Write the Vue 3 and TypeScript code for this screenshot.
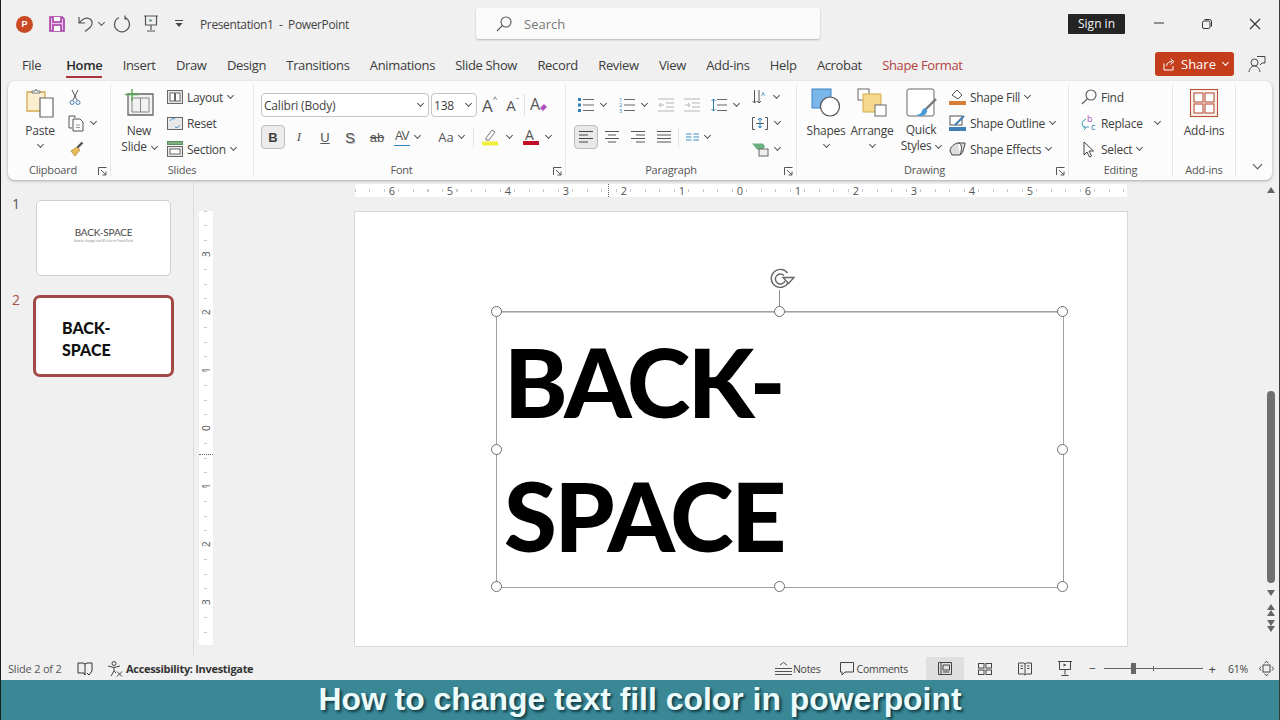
<script setup lang="ts">
const tabs = ['File', 'Home', 'Insert', 'Draw', 'Design', 'Transitions', 'Animations', 'Slide Show', 'Record', 'Review', 'View', 'Add-ins', 'Help', 'Acrobat']
const hRuler = [6, 5, 4, 3, 2, 1, 0, 1, 2, 3, 4, 5, 6]
const vRuler = [3, 2, 1, 0, 1, 2, 3]
const handles = [
  { x: 0, y: 0 }, { x: 50, y: 0 }, { x: 100, y: 0 },
  { x: 0, y: 50 }, { x: 100, y: 50 },
  { x: 0, y: 100 }, { x: 50, y: 100 }, { x: 100, y: 100 },
]
</script>

<template>
  <div class="app">
    <!-- title bar -->
    <header class="titlebar">
      <div class="qat">
        <span class="logo">P</span>
        <svg class="q-save" width="18" height="18" viewBox="0 0 18 18" fill="#eec5ee" stroke="#a23aa2" stroke-width="1.6"><path d="M2 2h12l2 2v12H2z" /><path d="M5 2v5h8V2M5 16v-6h8v6" fill="#fff" /></svg>
        <svg class="q-undo" width="18" height="18" viewBox="0 0 18 18" fill="none" stroke="#555" stroke-width="1.2"><path d="M2 2v6h6M2.500 8C5 4 9 2.500 12 3.500c4 1.500 4 6.500 1 9l-5 4" /></svg>
        <i class="chev q-c1"></i>
        <svg class="q-redo" width="18" height="18" viewBox="0 0 18 18" fill="none" stroke="#555" stroke-width="1.2"><path d="M6 2.500A7.500 7.500 0 1 0 12 2.500M12 0.500v3.500h3" /></svg>
        <svg class="q-show" width="16" height="18" viewBox="0 0 16 18" fill="none" stroke="#555" stroke-width="1.200"><path d="M1 1h14M2.500 1v9h11V1M8 10v5M4 16h8" /><path d="M6.500 4l3 1.500-3 1.500z" fill="#3a8a5a" stroke="none" /></svg>
        <svg class="q-more" width="10" height="10" viewBox="0 0 10 10" fill="#444"><path d="M1 1h8v1H1zM1.500 4h7L5 8z" /></svg>
        <span class="doc-title">Presentation1&nbsp; -&nbsp; PowerPoint</span>
      </div>
      <div class="search">
        <svg width="16" height="16" viewBox="0 0 16 16" fill="none" stroke="#555" stroke-width="1.100"><circle cx="10" cy="6" r="5" /><path d="M6.300 9.700 1 15" /></svg>
        <span>Search</span>
      </div>
      <div class="win">
        <span class="signin">Sign in</span>
        <svg class="w-min" width="12" height="12" viewBox="0 0 12 12" stroke="#333"><path d="M1 6h10" /></svg>
        <svg class="w-res" width="12" height="12" viewBox="0 0 12 12" fill="none" stroke="#333"><rect x="1.500" y="3" width="7.500" height="7.500" rx="1.500" /><path d="M3.500 1.500h5q2 0 2 2v5" /></svg>
        <svg class="w-cls" width="12" height="12" viewBox="0 0 12 12" stroke="#333" stroke-width="1.100"><path d="M1 1l10 10M11 1 1 11" /></svg>
      </div>
    </header>

    <!-- tabs -->
    <nav class="tabs">
      <span v-for="t in tabs" :key="t" class="tab" :class="{ active: t === 'Home', file: t === 'File' }">{{ t }}</span>
      <span class="tab shape-format">Shape Format</span>
      <span class="tabs-right">
        <span class="share">
          <svg width="13" height="13" viewBox="0 0 13 13" fill="none" stroke="#fff"><path d="M1 5.500V12h9V8M3.500 8C4 5 6 3.500 9 3.500M7.500 1 11 3.500 7.500 6.500" /></svg>
          Share <i class="chev white"></i>
        </span>
        <svg class="comments-ic" width="18" height="18" viewBox="0 0 18 18" fill="none" stroke="#444"><circle cx="6.500" cy="7.500" r="3.500" /><path d="M1 17c.5-4 3-6 5.500-6s5 2 5.500 6M9 1.500h8V8h-3l-2 2" /></svg>
      </span>
    </nav>

    <!-- ribbon -->
    <section class="ribbon">
      <div class="group g-clip">
        <div class="gbody">
          <div class="big paste">
            <svg width="30" height="30" viewBox="0 0 30 30" fill="none"><path d="M2 4h18v19H2z" fill="#fbeecf" stroke="#d9a84e" stroke-width="1.300" /><path d="M7 5V3h3l1-2 1 2h3v2z" fill="#fff" stroke="#777" /><path d="M15 10h13v19H15z" fill="#fff" stroke="#666" stroke-width="1.200" /></svg>
            <span class="lbl">Paste</span>
            <i class="chev"></i>
          </div>
          <div class="col clip-col">
            <div class="row26">
              <svg width="14" height="17" viewBox="0 0 14 17" fill="none" stroke="#555"><path d="M4 1l5 10M10 1 5 11" /><circle cx="4" cy="13.500" r="2" stroke="#4a7fb5" /><circle cx="10" cy="13.500" r="2" stroke="#4a7fb5" /></svg>
            </div>
            <div class="row26">
              <svg width="17" height="17" viewBox="0 0 17 17" fill="none" stroke="#555"><path d="M4 13H1V1h6v2" /><path d="M5 4h7l3 3v9H5z" /><path d="M8 10h4M8 12.500h4" stroke="#999" /></svg>
              <i class="chev copy-chev"></i>
            </div>
            <div class="row26">
              <svg width="16" height="16" viewBox="0 0 16 16"><path d="M9 6l-6 4 4 5 5-6z" fill="#e9bb5a" stroke="#a8802f" stroke-width=".7" /><path d="M9.500 6.500 14.500 1.500" stroke="#555" stroke-width="2.400" /></svg>
            </div>
          </div>
        </div>
        <div class="glabel clip-label">Clipboard<svg class="launch" width="9" height="9" viewBox="0 0 9 9" fill="none" stroke="#555"><path d="M.5 8V.5H8.500M3 3l5 5M8 4.500V8H4.500" /></svg></div>
      </div>

      <div class="group g-slides">
        <div class="gbody">
          <div class="big new-slide">
            <svg width="31" height="29" viewBox="0 0 31 29" fill="none"><path d="M4 6h25v21H4z" fill="#f2f2f2" stroke="#666" stroke-width="1.300" /><path d="M8 10h17v14H8zM16.500 10v14" stroke="#888" /><path d="M8 1v12M1 6.500h14" stroke="#54a854" stroke-width="1.400" /></svg>
            <span class="lbl new-lbl">New</span>
            <span class="lbl">Slide <i class="chev inl"></i></span>
          </div>
          <div class="col slide-col">
            <div class="row26 txt"><svg width="16" height="14" viewBox="0 0 16 14" fill="#e8e8e8" stroke="#666"><rect x=".5" y=".5" width="15" height="13" /><rect x="3" y="3" width="4.500" height="8" fill="#fff" /><rect x="8.500" y="3" width="4.500" height="8" fill="#fff" /></svg>Layout <i class="chev inl"></i></div>
            <div class="row26 txt"><svg width="16" height="14" viewBox="0 0 16 14" fill="#e8e8e8" stroke="#666"><rect x=".5" y="1.500" width="15" height="12" /><path d="M3 5q2-4 5-2M13 9q-2 4-5 2" fill="none" stroke="#4a90c9" /></svg>Reset</div>
            <div class="row26 txt"><svg width="16" height="16" viewBox="0 0 16 16" fill="#e8e8e8" stroke="#666"><rect x=".5" y=".5" width="15" height="3" fill="#7fb07f" stroke="#5c8f5c" /><rect x=".5" y="5.500" width="15" height="10" /><rect x="3" y="8" width="10" height="5" fill="#fff" /></svg>Section <i class="chev inl"></i></div>
          </div>
        </div>
        <div class="glabel">Slides</div>
      </div>

      <div class="group g-font">
        <div class="gbody font-body">
          <div class="f-row top">
            <span class="select fname">Calibri (Body)<i class="chev"></i></span>
            <span class="select fsize">138<i class="chev"></i></span>
            <span class="glyph grow">A<sup>^</sup></span>
            <span class="glyph shrink">A<sup>ˇ</sup></span>
            <span class="vsep"></span>
            <span class="glyph clear">
              <svg width="20" height="20" viewBox="0 0 20 20"><text x="1" y="15" font-size="16" fill="#555" font-family="Open Sans, sans-serif">A</text><path d="M11 13l4-4 3 3-4 4z" fill="#b04fc0" /></svg>
            </span>
          </div>
          <div class="f-row bottom">
            <span class="toggle">B</span>
            <span class="fmt ital">I</span>
            <span class="fmt und">U</span>
            <span class="fmt shad">S</span>
            <span class="fmt strike">ab</span>
            <span class="fmt av">AV<em></em></span><i class="chev c-av"></i>
            <span class="fmt aa">Aa</span><i class="chev c-aa"></i>
            <span class="vsep short"></span>
            <span class="fmt hl">
              <svg width="18" height="18" viewBox="0 0 18 18" fill="none"><path d="M5 10l6-8 3 2-6 8-3 0z" fill="#fff" stroke="#777" /><rect x="1" y="13.500" width="16" height="4" fill="#f2ee3c" /></svg>
            </span><i class="chev c-hl"></i>
            <span class="fmt col-a">
              <svg width="18" height="20" viewBox="0 0 18 20"><text x="3" y="13" font-size="14" fill="#555" font-family="Open Sans, sans-serif">A</text><rect x="1" y="14" width="16" height="4" fill="#c00f24" /></svg>
            </span><i class="chev c-col"></i>
          </div>
        </div>
        <div class="glabel font-label">Font<svg class="launch" width="9" height="9" viewBox="0 0 9 9" fill="none" stroke="#555"><path d="M.5 8V.5H8.500M3 3l5 5M8 4.500V8H4.500" /></svg></div>
      </div>

      <div class="group g-para">
        <div class="gbody para-body">
          <div class="para-left">
            <div class="p-row p-top">
              <svg width="16" height="16" viewBox="0 0 16 16" stroke="#666"><path d="M5 2.500h11M5 8h11M5 13.500h11" /><g fill="#2f7fb8" stroke="none"><rect y="1" width="3" height="3" /><rect y="6.500" width="3" height="3" /><rect y="12" width="3" height="3" /></g></svg><i class="chev"></i>
              <svg class="p-num" width="16" height="16" viewBox="0 0 16 16" stroke="#666"><path d="M5 2.500h11M5 8h11M5 13.500h11" /><g fill="#2f7fb8" stroke="none" font-size="5.500" font-family="Open Sans, sans-serif"><text y="4.500">1</text><text y="10">2</text><text y="15.500">3</text></g></svg><i class="chev"></i>
              <svg class="dim" width="16" height="14" viewBox="0 0 16 14" stroke="#b5b5b5"><path d="M0 1h16M8 5h8M8 9h8M0 13h16M6 7H1M3 5 1 7l2 2" fill="none" /></svg>
              <svg class="dim" width="16" height="14" viewBox="0 0 16 14" stroke="#b5b5b5"><path d="M0 1h16M8 5h8M8 9h8M0 13h16M1 7h5M4 5l2 2-2 2" fill="none" /></svg>
              <svg width="16" height="16" viewBox="0 0 16 16" fill="none" stroke="#666"><path d="M6 2.500h10M6 8h10M6 13.500h10" /><path d="M2.500 2v12M.5 4l2-2 2 2M.5 12l2 2 2-2" stroke="#2f7fb8" /></svg><i class="chev"></i>
            </div>
            <div class="p-row p-bottom">
              <span class="toggle al">
                <svg width="14" height="12" viewBox="0 0 14 12" stroke="#444"><path d="M0 .5h14M0 4h9M0 7.500h14M0 11h9" /></svg>
              </span>
              <svg class="a1" width="14" height="12" viewBox="0 0 14 12" stroke="#555"><path d="M0 .5h14M3 4h8M0 7.500h14M3 11h8" /></svg>
              <svg class="a1" width="14" height="12" viewBox="0 0 14 12" stroke="#555"><path d="M0 .5h14M5 4h9M0 7.500h14M5 11h9" /></svg>
              <svg class="a1" width="14" height="12" viewBox="0 0 14 12" stroke="#555"><path d="M0 .5h14M0 4h14M0 7.500h14M0 11h14" /></svg>
              <span class="vsep p-sep"></span>
              <svg width="13" height="8" viewBox="0 0 13 8" stroke="#3f8fc4"><path d="M0 1h5.500M7.500 1H13M0 4h5.500M7.500 4H13M0 7h5.500M7.500 7H13" /></svg><i class="chev"></i>
            </div>
          </div>
          <div class="col para-right">
            <div class="row26">
              <svg width="15" height="16" viewBox="0 0 15 16" fill="none" stroke="#555"><path d="M2.500 1v13M.5 12l2 2 2-2M7 1v13M5 12l2 2 2-2" /><text x="9" y="6.500" font-size="6" fill="#2f7fb8" stroke="none" font-family="Open Sans, sans-serif">A</text></svg><i class="chev"></i>
            </div>
            <div class="row26">
              <svg width="16" height="13" viewBox="0 0 16 13" fill="none" stroke="#555"><path d="M3 .5H.5v12H3M13 .5h2.500v12H13M4 6.500h8" /><path d="M8 1v10M6 3l2-2 2 2M6 9l2 2 2-2" stroke="#2f7fb8" /></svg><i class="chev"></i>
            </div>
            <div class="row26">
              <svg width="16" height="13" viewBox="0 0 16 13"><path d="M0 .5h11l2 3-2 3H5z" fill="#6ab17f" /><rect x="7" y="6" width="9" height="7" fill="#eee" stroke="#666" /></svg><i class="chev"></i>
            </div>
          </div>
        </div>
        <div class="glabel para-label">Paragraph<svg class="launch" width="9" height="9" viewBox="0 0 9 9" fill="none" stroke="#555"><path d="M.5 8V.5H8.500M3 3l5 5M8 4.500V8H4.500" /></svg></div>
      </div>

      <div class="group g-draw">
        <div class="gbody">
          <div class="big d-shapes">
            <svg width="30" height="30" viewBox="0 0 30 30"><rect x="1" y="1" width="19" height="19" fill="#7ab6e8" stroke="#3b84c4" /><circle cx="19" cy="18.500" r="9.500" fill="#fff" stroke="#555" stroke-width="1.200" /></svg>
            <span class="lbl">Shapes</span><i class="chev"></i>
          </div>
          <div class="big d-arrange">
            <svg width="30" height="30" viewBox="0 0 30 30"><rect x="1" y="1" width="11" height="11" fill="#fff" stroke="#666" /><path d="M6 6h18v18H6z" fill="#f6d98c" stroke="#d5a848" /><rect x="18" y="17" width="11" height="11" fill="#fff" stroke="#666" /></svg>
            <span class="lbl">Arrange</span><i class="chev"></i>
          </div>
          <div class="big d-quick">
            <svg width="31" height="29" viewBox="0 0 31 29" fill="none"><rect x="1" y="1" width="27" height="27" rx="2" fill="#fff" stroke="#666" /><path d="M30 11 19 22" stroke="#777" stroke-width="2.400" /><path d="M20 20c-3 0-4 2-5 5-1 1-4 2-5 2 4 2 10 1 11-3 .5-1 0-2-1-4z" fill="#4d9bd5" /></svg>
            <span class="lbl">Quick</span>
            <span class="lbl">Styles <i class="chev inl"></i></span>
          </div>
          <div class="col draw-col">
            <div class="row26 txt"><svg width="17" height="16" viewBox="0 0 17 16"><path d="M3 6l5-5 5 5-4 4z" fill="#fff" stroke="#555" /><rect y="12" width="17" height="4" fill="#d97c33" /></svg>Shape Fill <i class="chev inl"></i></div>
            <div class="row26 txt"><svg width="17" height="16" viewBox="0 0 17 16"><rect x="1" y="1" width="12" height="9" fill="#fff" stroke="#555" /><path d="M6 10l9-9" stroke="#3f7fb8" stroke-width="2" /><rect y="12" width="17" height="4" fill="#3f7fb8" /></svg>Shape Outline <i class="chev inl"></i></div>
            <div class="row26 txt"><svg width="17" height="14" viewBox="0 0 17 14" fill="#ddd" stroke="#444"><path d="M1 9c0-4 5-8 8-8h7v1L14 9c-.5 2-2 4-4 4H3z" /><path d="M9 1c3 0 5 4 2 12" fill="#fff" /></svg>Shape Effects <i class="chev inl"></i></div>
          </div>
        </div>
        <div class="glabel draw-label">Drawing<svg class="launch" width="9" height="9" viewBox="0 0 9 9" fill="none" stroke="#555"><path d="M.5 8V.5H8.500M3 3l5 5M8 4.500V8H4.500" /></svg></div>
      </div>

      <div class="group g-edit">
        <div class="gbody">
          <div class="col edit-col">
            <div class="row26 txt"><svg width="16" height="16" viewBox="0 0 16 16" fill="none" stroke="#555" stroke-width="1.100"><circle cx="10" cy="6" r="5" /><path d="M6.300 9.700 1 15" /></svg>Find</div>
            <div class="row26 txt"><svg width="16" height="20" viewBox="0 0 16 20" fill="none"><text x="6" y="9" font-size="9" fill="#b04fc0" stroke="none" font-family="Open Sans, sans-serif">b</text><text x="10" y="17" font-size="9" fill="#2f7fb8" stroke="none" font-family="Open Sans, sans-serif">c</text><path d="M5 6Q1 8 1 11t4 4M3 13l2 2-2 2M8 14h-3" stroke="#3f9fb8" /></svg>Replace <i class="chev inl rep-chev"></i></div>
            <div class="row26 txt"><svg width="16" height="17" viewBox="0 0 16 17" fill="#fff" stroke="#444"><path d="M3 1v13l3-3 2.500 5 2-1-2.500-5h4.500z" /></svg>Select <i class="chev inl"></i></div>
          </div>
        </div>
        <div class="glabel">Editing</div>
      </div>

      <div class="group g-add">
        <div class="gbody">
          <div class="big d-add">
            <svg width="28" height="28" viewBox="0 0 28 28" fill="none" stroke="#b8533a" stroke-width="1.100"><rect x=".5" y=".5" width="27" height="27" fill="#fbf2ee" /><rect x="4" y="4" width="9" height="9" fill="#fff" /><rect x="15" y="4" width="9" height="9" fill="#fff" /><rect x="4" y="15" width="9" height="9" fill="#fff" /><rect x="15" y="15" width="9" height="9" fill="#fff" /></svg>
            <span class="lbl">Add-ins</span>
          </div>
        </div>
        <div class="glabel">Add-ins</div>
      </div>

      <div class="collapse"><i class="chev big-chev"></i></div>
    </section>

    <!-- workspace -->
    <main class="workspace">
      <aside class="thumbs">
        <div class="thumb-row first">
          <span class="num">1</span>
          <div class="thumb t1">
            <span class="t1-title">BACK-SPACE</span>
            <span class="t1-sub">How to change text fill color in PowerPoint</span>
          </div>
        </div>
        <div class="thumb-row">
          <span class="num sel">2</span>
          <div class="thumb t2">BACK-<br />SPACE</div>
        </div>
      </aside>

      <div class="editor">
        <div class="h-ruler">
          <span v-for="(n, i) in hRuler" :key="i">{{ n }}</span>
          <i class="h-mark"></i>
        </div>
        <div class="stage">
          <div class="v-ruler">
            <span v-for="(n, i) in vRuler" :key="i">{{ n }}</span>
            <i class="v-mark"></i>
          </div>
          <div class="slide">
            <div class="rotate-line"></div>
            <svg class="rotate" width="26" height="22" viewBox="0 0 26 22" fill="none" stroke="#666" stroke-width="1.400">
              <path d="M18.500 14A9 9 0 1 1 17.500 5" />
              <path d="M15 13A5 5 0 1 1 14 7.500" />
              <path d="M13 9.500h11l-5.500 6z" fill="#fff" />
            </svg>
            <div class="selection">
              <span v-for="(h, i) in handles" :key="i" class="handle" :style="{ left: h.x + '%', top: h.y + '%' }"></span>
            </div>
            <div class="big-text">BACK-<br />SPACE</div>
          </div>
        </div>
      </div>

      <div class="scrollbar">
        <i class="tri up"></i>
        <i class="sb-thumb"></i>
        <i class="tri down first-down"></i>
        <i class="tri up two"></i><i class="tri up two tight"></i>
        <i class="tri down two"></i><i class="tri down two tight"></i>
      </div>
    </main>

    <!-- status bar -->
    <footer class="status">
      <span class="st-count">Slide 2 of 2</span>
      <svg class="st-book" width="16" height="14" viewBox="0 0 16 14" fill="none" stroke="#333"><path d="M1 1h5l2 1 2-1h5v8M1 1v10h6l1 2M8 2v11M10 11l2 2 3-4" /></svg>
      <svg class="st-acc" width="16" height="16" viewBox="0 0 16 16" fill="none" stroke="#444"><circle cx="7" cy="2.500" r="2" /><path d="M1 5l6 1.500L13 5M7 6.500V10l-3 5M7 10l2 2M10 10.500l5 5M15 10.500l-5 5" /></svg>
      <span class="st-acc-t">Accessibility: Investigate</span>
      <span class="st-right">
        <svg class="st-notes" width="17" height="13" viewBox="0 0 17 13" fill="none" stroke="#555"><path d="M5 3l3.500-2.500L12 3M0 6.500h17M0 9.500h17M0 12.500h17" /></svg>
        <span class="st-t st-notes-t">Notes</span>
        <svg class="st-com" width="14" height="14" viewBox="0 0 14 14" fill="none" stroke="#444"><path d="M.5.500h13V10H5L2 13v-3H.5z" /></svg>
        <span class="st-t st-com-t">Comments</span>
        <span class="view active">
          <svg width="14" height="13" viewBox="0 0 14 13" fill="none" stroke="#444"><path d="M.5.500h13v12H.5zM3 .5v12M5 3h6.500v5H5zM5 10h6.500" /></svg>
        </span>
        <span class="view">
          <svg width="14" height="12" viewBox="0 0 14 12" fill="none" stroke="#444"><rect x=".5" y=".5" width="5.500" height="4.500" /><rect x="8" y=".5" width="5.500" height="4.500" /><rect x=".5" y="7" width="5.500" height="4.500" /><rect x="8" y="7" width="5.500" height="4.500" /></svg>
        </span>
        <span class="view">
          <svg width="14" height="13" viewBox="0 0 14 13" fill="none" stroke="#444"><path d="M.5 1h5L7 2l1.500-1h5v11h-5L7 13l-1.500-1h-5zM7 2v11M2.500 4h2.500M2.500 6.500h2.500M9 4h2.500M9 6.500h2.500" /></svg>
        </span>
        <span class="view">
          <svg width="14" height="15" viewBox="0 0 14 15" fill="none" stroke="#444"><path d="M0 .5h14M1.500.5v8h11v-8M7 8.500v5M3.500 14.500h7" /><path d="M5.500 2.500l3 1.500-3 1.500z" fill="#444" stroke="none" /></svg>
        </span>
        <span class="zoom-minus">−</span>
        <span class="slider"><i class="tick"></i><i class="knob"></i></span>
        <span class="zoom-plus">+</span>
        <span class="st-t pct">61%</span>
        <svg class="fit" width="15" height="15" viewBox="0 0 15 15" fill="none" stroke="#444"><rect x="4" y="4" width="7" height="7" /><path d="M5.500 2 7.500.5 9.500 2M5.500 13l2 1.500 2-1.500M2 5.500.5 7.500 2 9.500M13 5.500l1.500 2-1.500 2" /></svg>
      </span>
    </footer>

    <!-- caption band -->
    <div class="caption">How to change text fill color in powerpoint</div>
  </div>
</template>

<style>
html, body { margin: 0; background: #f0f0f0; }
</style>

<style scoped>
.app {
  width: 1280px;
  height: 720px;
  overflow: hidden;
  background: #f0f0f0;
  color: #3f3f3f;
  font-family: "Open Sans", "Noto Sans", sans-serif;
  font-size: 12px;
  display: flex;
  flex-direction: column;
  box-sizing: border-box;
  border-left: 1px solid #1c1c1c;
  border-right: 1px solid #3a3a3a;
}
i { display: inline-block; font-style: normal; }
svg { display: block; flex: none; overflow: visible; }

.chev {
  width: 4px;
  height: 4px;
  border-right: 1.200px solid #555;
  border-bottom: 1.200px solid #555;
  transform: rotate(45deg);
  flex: none;
}
.chev.inl { margin: 0 0 3px 2px; vertical-align: middle; }
.chev.white { border-color: #fff; }

/* title bar */
.titlebar { height: 48px; flex: none; display: flex; align-items: center; }
.qat { width: 475px; display: flex; align-items: center; }
.logo {
  width: 17px; height: 17px; margin-left: 15px;
  border-radius: 50%;
  background: #cb4a26;
  color: #fff;
  font: 700 9px/17px "Liberation Sans", sans-serif;
  text-align: center;
}
.q-save { margin-left: 15px; }
.q-undo { margin-left: 11px; }
.q-c1 { margin-left: 4px; margin-bottom: 3px; }
.q-redo { margin-left: 9px; }
.q-show { margin-left: 12px; }
.q-more { margin-left: 15px; }
.doc-title { margin-left: 16px; font-size: 12px; letter-spacing: -.37px; color: #444; white-space: nowrap; }

.search {
  width: 344px; height: 31px;
  margin-top: -1px;
  background: #fafafa;
  border-radius: 3px;
  box-shadow: 0 1px 2px rgba(0,0,0,.25);
  display: flex; align-items: center; gap: 12px;
  padding-left: 20px;
  box-sizing: border-box;
  color: #777;
  font-size: 13px;
}
.win { display: flex; align-items: center; margin-left: 248px; }
.signin {
  width: 57px; height: 20px;
  background: #242424; color: #f4f4f4;
  border-radius: 1px;
  text-align: center; font-size: 12px; line-height: 20px;
}
.w-min { margin-left: 28px; margin-top: -3px; }
.w-res { margin-left: 36px; }
.w-cls { margin-left: 36px; }

/* tabs */
.tabs { height: 33px; flex: none; display: flex; align-items: flex-start; padding-left: 21px; box-sizing: border-box; position: relative; }
.tab {
  margin-right: 20.300px;
  height: 27px;
  padding-top: 8px;
  box-sizing: border-box;
  font-size: 13px;
  line-height: 18px;
  letter-spacing: -.35px;
  white-space: nowrap;
  color: #3c3c3c;
}
.tab.file { margin-right: 25px; }
.tab.active { font-weight: 600; color: #2a2a2a; border-bottom: 2px solid #a9333a; height: 30px; }
.shape-format { color: #b3423f; }
.tabs-right { margin-left: auto; display: flex; align-items: center; margin-top: 4px; padding-right: 13px; }
.share {
  width: 79px; height: 24px;
  background: #c43e1c; color: #fff;
  border-radius: 3px;
  display: flex; align-items: center; gap: 5px;
  padding-left: 8px; box-sizing: border-box;
  font-size: 13px;
}
.share .chev { margin: 0 0 3px 2px; }
.comments-ic { margin-left: 14px; }

/* ribbon */
.ribbon {
  height: 99px;
  flex: none;
  margin: 0 7px;
  background: #fcfcfc;
  border-radius: 7px;
  box-shadow: 0 1px 3px rgba(0,0,0,.3);
  display: flex;
  padding-top: 3px;
  box-sizing: border-box;
}
.group { display: flex; flex-direction: column; flex: none; box-sizing: border-box; border-right: 1px solid #e8e8e8; margin-bottom: 3px; }
.gbody { height: 78px; display: flex; flex: none; }
.glabel { position: relative; text-align: center; font-size: 11px; line-height: 16px; letter-spacing: -.2px; color: #555; }
.launch { position: absolute; right: 3px; top: 5px; }
.big { display: flex; flex-direction: column; align-items: center; padding-top: 4px; }
.big svg { margin-bottom: 5px; }
.lbl { font-size: 12px; line-height: 16px; letter-spacing: -.25px; white-space: nowrap; }
.big > .chev { margin-top: 3px; }
.col { display: flex; flex-direction: column; }
.row26 { height: 26px; display: flex; align-items: center; gap: 4px; flex: none; white-space: nowrap; }
.txt { font-size: 12px; letter-spacing: -.3px; }
.txt .chev { margin: 0 0 3px 1px; }

.g-clip { width: 103px; }
.paste { width: 34px; margin-left: 15px; }
.clip-col { margin-left: 11px; width: 40px; }
.copy-chev { margin: -3px 0 0 2px; }
.clip-label { padding-right: 12px; }
.g-slides { width: 143px; }
.new-slide { width: 50px; padding-left: 3px; }
.new-slide svg { margin-bottom: 6px; }
.slide-col { margin-left: 3px; }
.g-font { width: 312px; }
.font-body { flex-direction: column; padding-left: 7px; }
.font-label { padding-right: 16px; }
.f-row { display: flex; align-items: center; flex: none; }
.f-row.top { height: 24px; margin-top: 9px; }
.f-row.bottom { height: 24px; margin-top: 8px; }
.select {
  height: 24px; box-sizing: border-box;
  border: 1px solid #c4c4c4; border-radius: 4px;
  display: flex; align-items: center; justify-content: space-between;
  padding: 0 5px 0 2px;
  background: #fff;
  font-size: 12px; letter-spacing: -.2px;
}
.select .chev { margin-bottom: 3px; }
.fname { width: 168px; margin-right: 2px; }
.fsize { width: 46px; }
.glyph { font-size: 17px; color: #555; display: flex; }
.glyph sup { font-size: 8px; line-height: 10px; }
.grow { margin-left: 5px; }
.shrink { margin-left: 9px; font-size: 15px; line-height: 20px; }
.vsep { width: 1px; height: 22px; background: #e2e2e2; }
.top .vsep { margin-left: 5px; }
.clear { margin-left: 4px; }
.toggle {
  width: 24px; height: 24px; box-sizing: border-box;
  display: flex; align-items: center; justify-content: center;
  border: 1px solid #bdbdbd; border-radius: 4px;
  background: #ececec;
  font-family: "Liberation Sans", sans-serif;
  font-weight: 700; font-size: 13px;
}
.fmt { color: #555; font-family: "Liberation Sans", sans-serif; font-size: 13px; display: flex; justify-content: center; }
.ital { width: 12px; margin-left: 8px; font-style: italic; font-family: "Liberation Serif", serif; }
.und { width: 12px; margin-left: 14px; text-decoration: underline; }
.shad { width: 12px; margin-left: 13px; font-size: 15px; text-shadow: 1px 1px 0 #bbb; }
.strike { width: 18px; margin-left: 12px; text-decoration: line-through; }
.av { width: 16px; margin-left: 8px; position: relative; font-size: 12px; padding-bottom: 3px; letter-spacing: -.5px; }
.av em { position: absolute; left: 0; right: 0; bottom: 0; height: 1px; background: #2f7fb8; }
.f-row.bottom .chev { margin: -3px 0 0 5px; }
.f-row.bottom .c-av { margin-left: 5px; }
.aa { width: 18px; margin-left: 17px; font-family: "Open Sans", sans-serif; font-size: 13px; }
.f-row.bottom .c-aa { margin-left: 4px; }
.vsep.short { margin-left: 9px; height: 20px; }
.hl { margin-left: 7px; }
.f-row.bottom .c-hl { margin-left: 8px; }
.col-a { margin-left: 10px; }
.f-row.bottom .c-col { margin-left: 6px; }
.g-para { width: 231px; }
.para-body { padding-left: 8px; }
.para-left { width: 175px; }
.p-row { display: flex; align-items: center; }
.p-top { height: 24px; margin-top: 9px; padding-left: 4px; }
.p-top .chev { margin: -3px 0 0 7px; }
.p-top svg { margin-left: 11px; }
.p-top svg:first-child { margin-left: 0; }
.p-top svg.p-num { margin-left: 13px; }
.p-top .dim + .dim { margin-left: 10px; }
.p-bottom { height: 24px; margin-top: 8px; }
.al { width: 24px; background: #e9e9e9; }
.a1 { margin-left: 12px; }
.al + .a1 { margin-left: 7px; }
.p-sep { margin-left: 7px; margin-right: 7px; height: 20px; }
.p-bottom .chev { margin: -3px 0 0 6px; }
.para-right { margin-left: 3px; }
.para-right .chev { margin: -3px 0 0 3px; }
.para-label { padding-right: 30px; padding-left: 10px; }
.g-draw { width: 272px; }
.d-shapes { width: 50px; margin-left: 4px; }
.d-arrange { width: 42px; }
.d-quick { width: 46px; margin-left: 5px; }
.draw-col { margin-left: 5px; }
.draw-label { padding-right: 16px; }
.g-edit { width: 104px; }
.edit-col { margin-left: 12px; }
.txt .rep-chev { margin-left: 8px; }
.g-add { width: 63px; }
.d-add { width: 62px; padding-top: 5px; }
.d-add svg { margin-bottom: 6px; }
.collapse { flex: 1; display: flex; align-items: flex-end; justify-content: center; padding-bottom: 12px; padding-left: 6px; box-sizing: border-box; }
.big-chev { width: 6px; height: 6px; }

/* workspace */
.workspace { flex: 1; min-height: 0; display: flex; }
.thumbs { width: 192px; flex: none; border-right: 1px solid #dcdcdc; }
.thumb-row { display: flex; align-items: flex-start; height: 95px; }
.thumb-row.first { margin-top: 20px; }
.num { width: 35px; margin-top: -4px; padding-left: 11px; box-sizing: border-box; font-size: 14px; line-height: 16px; color: #555; flex: none; }
.num.sel { color: #a9504a; width: 32px; margin-top: -3px; }
.thumb { background: #fff; box-sizing: border-box; flex: none; }
.t1 {
  width: 135px; height: 76px;
  border: 1px solid #cfcfcf; border-radius: 5px;
  display: flex; flex-direction: column; align-items: center;
  padding-top: 24px;
}
.t1-title { font-family: "Lato", sans-serif; font-size: 10px; line-height: 14px; color: #444; letter-spacing: -.2px; }
.t1-sub { font-size: 3px; line-height: 5px; color: #777; white-space: nowrap; }
.t2 {
  width: 141px; height: 82px;
  border: 3px solid #a14a45; border-radius: 7px;
  padding: 19px 0 0 26px;
  font: 900 16px/22px "Lato", sans-serif;
  color: #111;
}

.editor { width: 1072px; flex: none; display: flex; flex-direction: column; }
.h-ruler {
  position: relative;
  width: 772px; height: 13px;
  margin: 4px 0 14px 161px;
  padding-left: 8px;
  box-sizing: border-box;
  background: #fff repeating-linear-gradient(90deg, #c8c8c8 0 1px, transparent 1px 14.500px) 0 5px / 100% 3px no-repeat;
  display: flex;
  flex: none;
}
.h-ruler span { width: 58px; flex: none; text-align: center; font-size: 11px; line-height: 13px; color: #555; }
.h-mark { position: absolute; left: 253px; top: 0; height: 13px; border-left: 1px dotted #666; }
.stage { display: flex; flex: 1; min-height: 0; }
.v-ruler {
  position: relative;
  width: 14px; height: 434px;
  margin: 0 141px 0 5px;
  padding-top: 14px;
  box-sizing: border-box;
  background: #fff repeating-linear-gradient(180deg, #c8c8c8 0 1px, transparent 1px 14.500px) 5px 0 / 3px 100% no-repeat;
  display: flex; flex-direction: column;
  flex: none;
}
.v-ruler span { height: 58px; flex: none; writing-mode: vertical-rl; transform: rotate(180deg); text-align: center; font-size: 10px; line-height: 14px; color: #555; }
.v-mark { position: absolute; left: 0; top: 243px; width: 14px; border-top: 1px dotted #666; }

.slide {
  position: relative;
  width: 774px; height: 436px;
  background: #fff;
  border: 1px solid #d8d8d8;
  box-sizing: border-box;
  flex: none;
}
.selection {
  position: absolute;
  left: 141px; top: 99px;
  width: 568px; height: 277px;
  box-sizing: border-box;
  border: 1px solid #a0a0a0;
  box-shadow: inset 0 1px 0 #c8c8c8;
}
.handle {
  position: absolute;
  width: 11px; height: 11px;
  margin: -6px 0 0 -6px;
  box-sizing: border-box;
  border: 1.800px solid #6e6e6e;
  border-radius: 50%;
  background: #fff;
}
.rotate-line { position: absolute; left: 424px; top: 78px; height: 21px; border-left: 1px solid #8c8c8c; }
.rotate { position: absolute; left: 415px; top: 56px; }
.big-text {
  position: absolute;
  left: 149px; top: 102px;
  font: 900 96px/134px "Lato", sans-serif;
  color: #000;
  letter-spacing: -2.400px;
}

.scrollbar { flex: 1; position: relative; }
.sb-thumb { position: absolute; left: 1px; top: 211px; width: 8px; height: 192px; border-radius: 4px; background: #707070; }
.tri { position: absolute; left: 1px; width: 0; height: 0; border-left: 4.500px solid transparent; border-right: 4.500px solid transparent; }
.tri.up { border-bottom: 6px solid #666; top: 7px; }
.tri.down { border-top: 6px solid #666; }
.first-down { top: 410px; }
.tri.up.two { top: 424px; }
.tri.up.two.tight { top: 430px; }
.tri.down.two { top: 440px; }
.tri.down.two.tight { top: 446px; }

/* status bar */
.status {
  height: 23px; flex: none;
  display: flex; align-items: center;
  padding-left: 7px;
  font-size: 11px;
  letter-spacing: -.2px;
}
.st-count { color: #555; width: 69px; }
.st-book { margin-right: 14px; }
.st-acc { margin-right: 3px; }
.st-acc-t { font-weight: 700; color: #333; white-space: nowrap; letter-spacing: -.3px; }
.st-right { margin-left: auto; display: flex; align-items: center; height: 23px; }
.st-t { color: #444; font-size: 10.500px; letter-spacing: -.25px; }
.st-notes { margin-right: 1px; }
.st-notes-t { margin-right: 19px; }
.st-com { margin-right: 3px; }
.st-com-t { margin-right: 18px; }
.view { width: 40px; height: 23px; display: flex; align-items: center; justify-content: center; }
.view.active { width: 38px; margin-right: 1px; background: #dfdfdf; }
.zoom-minus { margin-left: 4px; font-size: 12px; width: 10px; }
.slider { position: relative; width: 99px; height: 1px; background: #666; margin-left: 5px; }
.knob { position: absolute; left: 27px; top: -5px; width: 5px; height: 11px; background: #666; }
.tick { position: absolute; left: 49px; top: -2px; width: 1px; height: 5px; background: #666; }
.zoom-plus { width: 18px; font-size: 13px; text-align: center; }
.pct { margin-left: 7px; width: 20px; }
.fit { margin-left: 11px; margin-right: 5px; }

.caption {
  height: 40px; flex: none;
  margin: 0 -1px;
  background: #3a8896;
  box-sizing: border-box;
  text-align: center;
  font: 700 31.900px/39px "Liberation Sans", sans-serif;
  color: #ecfbfb;
  text-shadow: 2px 2px 3px #0e3640;
  white-space: nowrap;
}
</style>
